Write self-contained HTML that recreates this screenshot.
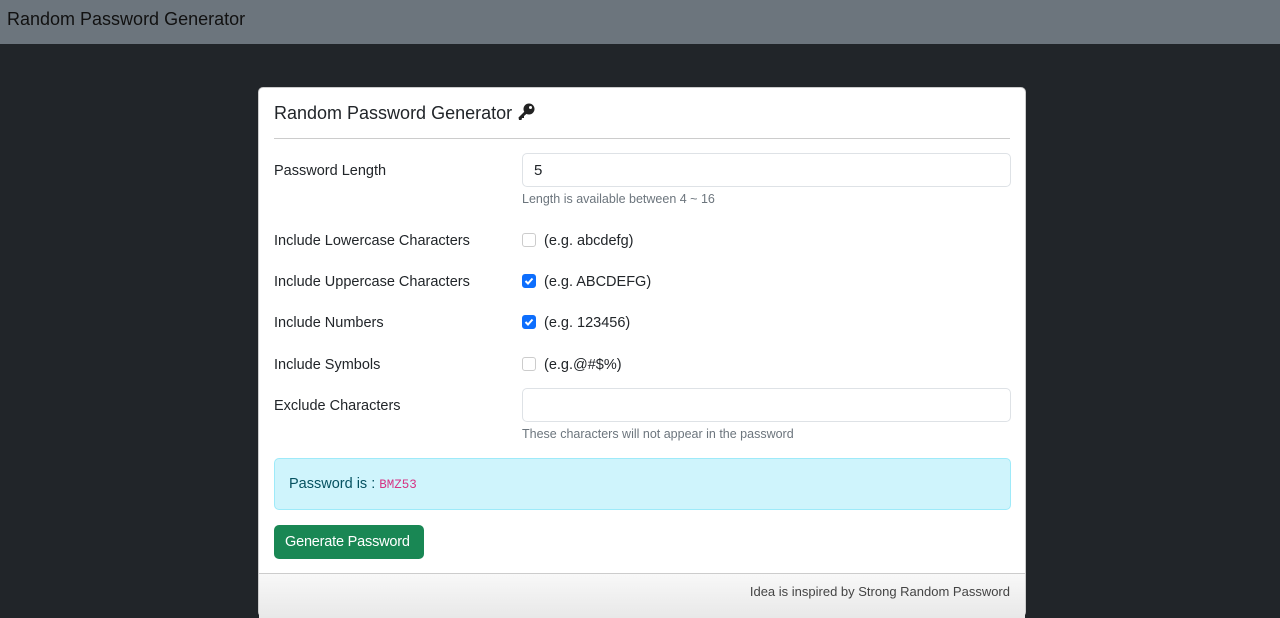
<!DOCTYPE html>
<html><head><style>
*{box-sizing:border-box;margin:0;padding:0}
body{width:1280px;height:599px;overflow:hidden;background:#212529;font-family:"Liberation Sans",sans-serif;color:#212529;font-size:14.5px}
.nav{height:44px;background:#6c757d;padding:9px 7px;font-size:18px;color:#111}
.card{position:absolute;left:258px;top:87px;width:768px;height:530px;background:#fff;border-radius:5px;border:1px solid #ccc}
.abs{position:absolute;white-space:nowrap}
.title{left:15px;top:15px;font-size:18px;color:#212529}
.hr{left:15px;right:15px;top:50px;height:1px;background:#ccc}
.lbl{left:15px}
.input{left:263px;width:489px;height:34px;border:1px solid #dee2e6;border-radius:5px;padding:8px 11px;font-size:15px}
.help{left:263px;font-size:12.5px;color:#6c757d}
.cb{left:263px;width:14px;height:14px;border:1px solid #ccc;border-radius:3px}
.cb.on{background:#0d6efd;border-color:#0d6efd}
.cbt{left:285px}
.alert{left:15px;top:370px;width:737px;height:52px;background:#cff4fc;border:1px solid #9eeaf9;border-radius:5px;color:#055160;padding:17px 14px}
.alert code{font-family:"Liberation Mono",monospace;color:#d63384;font-size:12.5px}
.btn{left:15px;top:437px;width:150px;height:34px;background:#198754;border-radius:5px;color:#fff;font-size:14.5px;padding:9px 11px;letter-spacing:-0.2px}
.foot{left:0;right:0;top:485px;height:45px;background:linear-gradient(#f8f8f8,#e8e8e8);border-top:1px solid #ccc;text-align:right;padding:10px 15px;font-size:13px;color:#444}
</style></head><body>
<div class="nav">Random Password Generator</div>
<div class="card">
<div class="abs title">Random Password Generator <svg width="18" height="18" viewBox="0 0 18 18" style="vertical-align:-2px"><circle cx="12" cy="6" r="5.5" fill="#222"/><circle cx="13.5" cy="4.5" r="1.5" fill="#fff"/><path d="M8.5 7.5 L1.5 14.5 L2 17 L4.5 17 L5 15 L7 15 L7 13 L10.5 10Z" fill="#222"/></svg></div>
<div class="abs hr"></div>
<div class="abs lbl" style="top:75px">Password Length</div>
<div class="abs input" style="top:65px">5</div>
<div class="abs help" style="top:104px">Length is available between 4 ~ 16</div>
<div class="abs lbl" style="top:145px">Include Lowercase Characters</div>
<div class="abs cb" style="top:145px"></div><div class="abs cbt" style="top:145px">(e.g. abcdefg)</div>
<div class="abs lbl" style="top:186px">Include Uppercase Characters</div>
<div class="abs cb on" style="top:186px"><svg width="12" height="12" viewBox="0 0 12 12"><path d="M2.5 6 L5 8.5 L9.5 3.5" stroke="#fff" stroke-width="2" fill="none"/></svg></div><div class="abs cbt" style="top:186px">(e.g. ABCDEFG)</div>
<div class="abs lbl" style="top:227px">Include Numbers</div>
<div class="abs cb on" style="top:227px"><svg width="12" height="12" viewBox="0 0 12 12"><path d="M2.5 6 L5 8.5 L9.5 3.5" stroke="#fff" stroke-width="2" fill="none"/></svg></div><div class="abs cbt" style="top:227px">(e.g. 123456)</div>
<div class="abs lbl" style="top:269px">Include Symbols</div>
<div class="abs cb" style="top:269px"></div><div class="abs cbt" style="top:269px">(e.g.@#$%)</div>
<div class="abs lbl" style="top:310px">Exclude Characters</div>
<div class="abs input" style="top:300px"></div>
<div class="abs help" style="top:339px">These characters will not appear in the password</div>
<div class="abs alert">Password is : <code>BMZ53</code></div>
<div class="abs btn">Generate Password</div>
<div class="abs foot">Idea is inspired by Strong Random Password</div>
</div>
</body></html>
